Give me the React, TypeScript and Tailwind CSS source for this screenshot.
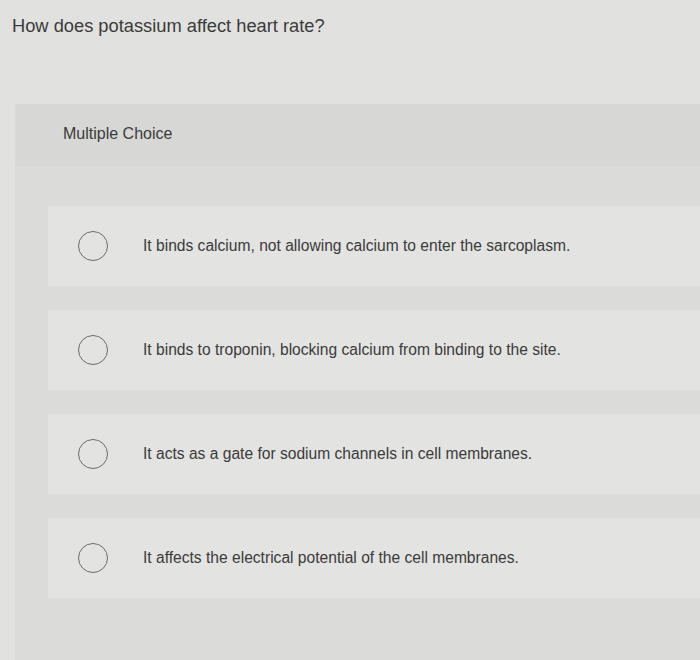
const options = [
  'It binds calcium, not allowing calcium to enter the sarcoplasm.',
  'It binds to troponin, blocking calcium from binding to the site.',
  'It acts as a gate for sodium channels in cell membranes.',
  'It affects the electrical potential of the cell membranes.',
];

export default function App() {
  return (
    <div className="w-[700px] h-[660px] overflow-hidden bg-[#e1e1df] text-[#3b3b3b] font-['Liberation_Sans',Arial,sans-serif]">
      <h1 className="pl-[12px] pt-[14px] text-[18.3px] leading-[24px]">How does potassium affect heart rate?</h1>

      <div className="ml-[15px] mt-[66px] h-[600px] bg-[#dbdbd9]">
        <div className="h-[62px] bg-[#d7d7d5] pl-[48px] pt-[20px] text-[16px] leading-[20px]">
          Multiple Choice
        </div>

        <div className="flex flex-col gap-[24px] pt-[40px] pl-[33px]">
          {options.map((text, i) => (
            <div key={i} className="h-[80px] bg-[#e3e3e1] flex items-center">
              <span className="ml-[30px] w-[30px] h-[30px] rounded-full border-[1.5px] border-[#6b6b6b] shrink-0" />
              <span className="ml-[35px] text-[15.6px] leading-[20px]">{text}</span>
            </div>
          ))}
        </div>
      </div>
    </div>
  );
}
